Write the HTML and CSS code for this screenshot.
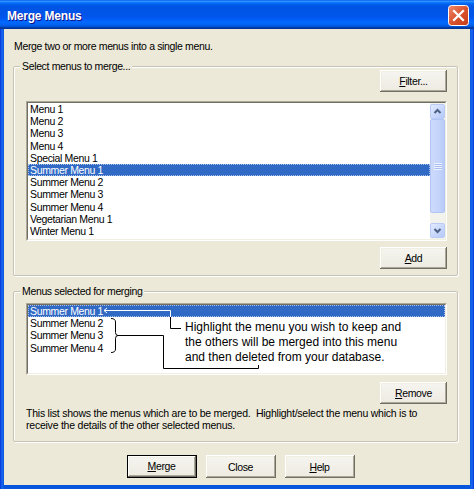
FILE: index.html
```html
<!DOCTYPE html>
<html>
<head>
<meta charset="utf-8">
<title>Merge Menus</title>
<link rel="stylesheet" href="styles.css">
</head>
<body>
<div class="window">
  <div class="titlebar">
    <span class="title">Merge Menus</span>
    <span class="close">
      <svg width="21" height="21" viewBox="0 0 21 21">
        <defs>
          <linearGradient id="cg" x1="0" y1="0" x2="1" y2="1">
            <stop offset="0" stop-color="#F08A6C"/>
            <stop offset="0.5" stop-color="#DB5430"/>
            <stop offset="1" stop-color="#C23A16"/>
          </linearGradient>
        </defs>
        <rect x="0.5" y="0.5" width="20" height="20" rx="3" fill="url(#cg)" stroke="#FFFFFF"/>
        <path d="M6 6 L15 15 M15 6 L6 15" stroke="#FFFFFF" stroke-width="2.2" stroke-linecap="square"/>
      </svg>
    </span>
  </div>
  <div class="client">
    <div class="intro">Merge two or more menus into a single menu.</div>

    <div class="group g1">
      <span class="group-label">Select menus to merge...</span>
      <div class="btn-row first"><button class="btn"><u>F</u>ilter...</button></div>
      <div class="listbox lb1">
        <div class="list-inner">
          <ul class="items">
            <li>Menu 1</li>
            <li>Menu 2</li>
            <li>Menu 3</li>
            <li>Menu 4</li>
            <li>Special Menu 1</li>
            <li class="sel">Summer Menu 1</li>
            <li>Summer Menu 2</li>
            <li>Summer Menu 3</li>
            <li>Summer Menu 4</li>
            <li>Vegetarian Menu 1</li>
            <li>Winter Menu 1</li>
            <li>Winter Menu 2</li>
          </ul>
          <div class="scrollbar">
            <div class="sb-btn">
              <svg width="13" height="13" viewBox="0 0 13 13"><path d="M3.5 8 L6.5 5 L9.5 8" fill="none" stroke="#4D6185" stroke-width="2"/></svg>
            </div>
            <div class="thumb">
              <svg width="8" height="8" viewBox="0 0 8 8"><path d="M0 1.5 H8 M0 3.5 H8 M0 5.5 H8 M0 7.5 H8" stroke="#EEF3FE" stroke-width="1"/><path d="M1 2.5 H8 M1 4.5 H8 M1 6.5 H8" stroke="#A8BDF2" stroke-width="1"/></svg>
            </div>
            <div class="track"></div>
            <div class="sb-btn">
              <svg width="13" height="13" viewBox="0 0 13 13"><path d="M3.5 5 L6.5 8 L9.5 5" fill="none" stroke="#4D6185" stroke-width="2"/></svg>
            </div>
          </div>
        </div>
      </div>
      <div class="btn-row after-list"><button class="btn"><u>A</u>dd</button></div>
    </div>

    <div class="group g2">
      <span class="group-label">Menus selected for merging</span>
      <div class="listbox lb2">
        <div class="list-inner">
          <ul class="items">
            <li class="sel">Summer Menu 1</li>
            <li>Summer Menu 2</li>
            <li>Summer Menu 3</li>
            <li>Summer Menu 4</li>
          </ul>
        </div>
        <svg class="callout" width="421" height="72" viewBox="0 0 421 72">
          <path d="M78 7.5 H144.5 V14" fill="none" stroke="#FFFFFF" stroke-width="1"/>
          <path d="M81 5 L78 7.5 L81 10" fill="none" stroke="#FFFFFF" stroke-width="1"/>
          <path d="M144.5 14 V25.5 H155" fill="none" stroke="#000000" stroke-width="1"/>
          <path d="M85 15.5 Q89.5 15.5 89.5 19 V29.5 Q89.5 32.5 92 32.5 Q89.5 32.5 89.5 35.5 V46 Q89.5 49.5 85 49.5" fill="none" stroke="#000000" stroke-width="1"/>
          <path d="M92 32.5 H137.5 V65.5 H232.5 V62" fill="none" stroke="#000000" stroke-width="1"/>
        </svg>
        <div class="note">Highlight the menu you wish to keep and<br>the others will be merged into this menu<br>and then deleted from your database.</div>
      </div>
      <div class="btn-row after-list2"><button class="btn"><u>R</u>emove</button></div>
      <div class="desc">This list shows the menus which are to be merged.&nbsp; Highlight/select the menu which is to<br>receive the details of the other selected menus.</div>
    </div>

    <div class="footer">
      <button class="btn wide default"><u>M</u>erge</button>
      <button class="btn wide">Close</button>
      <button class="btn wide"><u>H</u>elp</button>
    </div>
  </div>
</div>
</body>
</html>
```

FILE: styles.css
```css
* { box-sizing: border-box; }

html, body {
  margin: 0;
  padding: 0;
}

body {
  width: 474px;
  height: 489px;
  overflow: hidden;
  background: #FFFFFF;
  font-family: "Liberation Sans", Arial, sans-serif;
  font-size: 10.5px;
  letter-spacing: -0.35px;
  color: #000000;
}

.window {
  width: 474px;
  height: 489px;
  display: flex;
  flex-direction: column;
  background: linear-gradient(to right, #0831D9 0, #166AEE 2px, #0855DD 4px, #0855DD 470px, #166AEE 472px, #0831D9 474px);
}

.titlebar {
  height: 29px;
  flex: none;
  display: flex;
  align-items: flex-start;
  justify-content: space-between;
  padding-left: 7px;
  background: linear-gradient(to bottom, #0058EE 0%, #3593FF 4%, #288EFF 6%, #127DFF 8%, #036FFC 10%, #0262EE 14%, #0057E5 20%, #0054E3 24%, #0055EB 56%, #005BF5 66%, #026AFE 76%, #0062EF 86%, #0052D6 92%, #0040AB 94%, #003092 100%);
}

.title {
  margin-top: 9px;
  font-size: 12px;
  line-height: 14px;
  font-weight: bold;
  letter-spacing: -0.2px;
  color: #FFFFFF;
  text-shadow: 1px 1px #0F1089;
}

.close {
  margin-top: 5px;
  margin-right: 5px;
  width: 21px;
  height: 21px;
  display: block;
}

.close svg { display: block; }

.client {
  flex: 1;
  margin: 0 4px 4px 4px;
  background: #ECE9D8;
  padding-top: 11px;
  display: flex;
  flex-direction: column;
}

.intro {
  padding-left: 10px;
  line-height: 12px;
  height: 12px;
}

.group {
  margin: 0 12px 0 9px;
  border: 1px solid #C6C3B4;
  box-shadow: inset 1px 1px 0 #FFFFFF, 1px 1px 0 #FFFFFF;
  border-radius: 2px;
  padding: 0 10px 6px 12px;
  display: flex;
  flex-direction: column;
}

.g1 { margin-top: 14px; }
.g2 { margin-top: 15px; padding-bottom: 10px; }

.group-label {
  display: block;
  align-self: flex-start;
  margin: -7px 0 0 -6px;
  padding: 0 2px;
  background: #ECE9D8;
  line-height: 12px;
  height: 12px;
}

.btn-row {
  display: flex;
  justify-content: flex-end;
}

.btn-row.first { margin-top: -2px; }
.btn-row.after-list { margin-top: 6px; }
.btn-row.after-list2 { margin-top: 7px; }

.btn {
  width: 67px;
  height: 22px;
  padding: 0;
  margin: 0;
  border: none;
  font: inherit;
  letter-spacing: inherit;
  color: #000000;
  background: linear-gradient(to bottom, #F6F5F0, #ECEAE0);
  box-shadow: inset -1px -1px 0 #716F64, inset 1px 1px 0 #FFFFFF, inset -2px -2px 0 #ACA899, inset 2px 2px 0 #F1EFE2;
  text-align: center;
  line-height: 20px;
}

.btn u { text-decoration: underline; text-underline-offset: 1px; }

.btn.wide {
  width: 70px;
  height: 23px;
}

.btn.default {
  border: 1px solid #000000;
  line-height: 19px;
}

.listbox {
  border: 1px solid;
  border-color: #ACA899 #FFFFFF #FFFFFF #ACA899;
  background: #FFFFFF;
}

.lb1 { margin-top: 9px; height: 140px; }
.lb2 { margin-top: 6px; height: 72px; position: relative; }

.list-inner {
  height: 100%;
  display: flex;
  border: 1px solid;
  border-color: #716F64 #F1EFE2 #F1EFE2 #716F64;
  background: #FFFFFF;
  overflow: hidden;
}

.items {
  flex: 1;
  margin: 0;
  padding: 0;
  list-style: none;
  overflow: hidden;
}

.items li {
  height: 12.2px;
  line-height: 12.2px;
  padding-left: 2px;
  white-space: nowrap;
}

.items li.sel {
  background: #316AC5;
  color: #FFFFFF;
  outline: 1px dotted #A9C0E8;
  outline-offset: -1px;
}

.scrollbar {
  width: 15px;
  flex: none;
  display: flex;
  flex-direction: column;
  padding: 1px 0;
  background: #F3F3EE;
}

.sb-btn {
  height: 15px;
  flex: none;
  border: 1px solid #B9CBF5;
  border-radius: 2px;
  background: linear-gradient(135deg, #E2EBFE 0%, #C8D7FC 55%, #B6CAF7 100%);
  display: flex;
  align-items: center;
  justify-content: center;
}

.sb-btn svg { display: block; }

.thumb {
  height: 94px;
  flex: none;
  border: 1px solid #B1C5F5;
  border-radius: 2px;
  background: linear-gradient(to right, #CDDAFC 0%, #C4D4FB 60%, #B8CBF7 100%);
  display: flex;
  align-items: center;
  justify-content: center;
}

.thumb svg { display: block; }

.track { flex: 1; }

.callout {
  position: absolute;
  left: -1px;
  top: -1px;
  display: block;
}

.note {
  position: absolute;
  left: 158px;
  top: 16px;
  font-size: 12px;
  line-height: 15px;
  letter-spacing: 0;
  white-space: nowrap;
}

.desc {
  margin-top: 3px;
  line-height: 12px;
  letter-spacing: -0.23px;
  white-space: nowrap;
}

.footer {
  margin-top: 13px;
  display: flex;
  justify-content: center;
  gap: 9px;
  padding-left: 7px;
}
```
